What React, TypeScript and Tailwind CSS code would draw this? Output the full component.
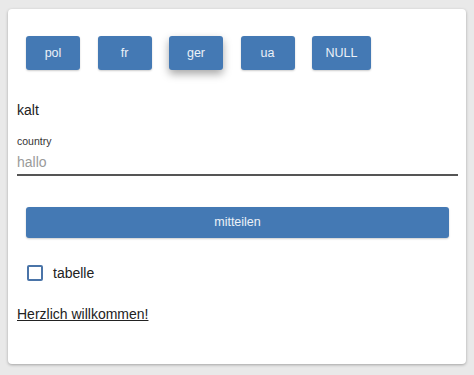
import React from "react";

const langs = ["pol", "fr", "ger", "ua", "NULL"];

export default function App() {
  return (
    <div className="min-h-screen bg-[#e9e9e9] px-2 pt-[9px] pb-[11px]" style={{ fontFamily: "'Liberation Sans', Arial, sans-serif" }}>
      <div className="flex h-[355px] w-[458px] flex-col items-start rounded bg-white pl-[9px] shadow-[0_1px_3px_rgba(0,0,0,0.3)]">
        <div className="flex gap-[17.5px] pl-[9px] pt-[27px]">
          {langs.map((l) => (
            <button
              key={l}
              className={`h-[34px] rounded-[3px] bg-[#4479b4] text-[12.5px] text-white/90 ${l === "NULL" ? "w-[59px]" : "w-[54px]"} ${
                l === "ger" ? "shadow-[0_4px_8px_rgba(0,0,0,0.35)]" : "shadow-[0_1px_2px_rgba(0,0,0,0.2)]"
              }`}
            >
              {l}
            </button>
          ))}
        </div>

        <div className="mt-[30px] text-[14px] leading-[20px] text-[#222]">kalt</div>

        <div className="mt-[15px] w-[441px]">
          <div className="text-[10.5px] leading-[13px] text-[#333]">country</div>
          <div className="mt-[5px] text-[14px] leading-[18px] text-[#9a9a9a]">hallo</div>
          <div className="mt-[3px] h-[2px] bg-[#555]" />
        </div>

        <button className="ml-[9px] mt-[31px] h-[31px] w-[423px] rounded-[3px] bg-[#4479b4] text-[12.5px] text-white/90 shadow-[0_1px_2px_rgba(0,0,0,0.2)]">
          mitteilen
        </button>

        <div className="ml-[10px] mt-[25px] flex h-[20px] items-center gap-[10px]">
          <div className="h-[16px] w-[16px] rounded-[2px] border-2 border-[#4a74a8]" />
          <span className="text-[14px] leading-[20px] text-[#222]">tabelle</span>
        </div>

        <div className="mt-[21px] leading-[20px]">
          <a className="text-[14px] text-[#222] underline">Herzlich willkommen!</a>
        </div>
      </div>
    </div>
  );
}
